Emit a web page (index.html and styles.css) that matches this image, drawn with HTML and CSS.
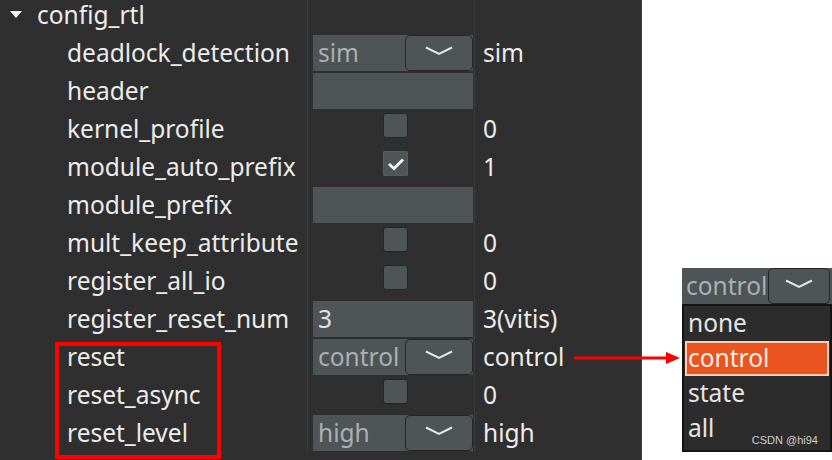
FILE: index.html
```html
<!DOCTYPE html>
<html>
<head>
<meta charset="utf-8">
<link rel="stylesheet" href="styles.css">
</head>
<body>
<div class="screen">
  <div class="tree">
    <div class="row first">
      <div class="c1 parent"><svg class="twisty" width="12" height="8" viewBox="0 0 12 8"><polygon points="0,0 12,0 6,7" fill="#f2f2f2"/></svg>config_rtl</div>
      <div class="c2"></div>
      <div class="c3"></div>
    </div>
    <div class="row">
      <div class="c1">deadlock_detection</div>
      <div class="c2"><div class="combo"><span class="combo-text">sim</span><span class="combo-btn"><svg width="28" height="10" viewBox="0 0 28 10"><path d="M1 1.5 L14 8 L27 1.5" fill="none" stroke="#e6e6e6" stroke-width="2"/></svg></span></div></div>
      <div class="c3">sim</div>
    </div>
    <div class="row">
      <div class="c1">header</div>
      <div class="c2"><div class="edit"></div></div>
      <div class="c3"></div>
    </div>
    <div class="row">
      <div class="c1">kernel_profile</div>
      <div class="c2 check-cell"><span class="check"></span></div>
      <div class="c3">0</div>
    </div>
    <div class="row">
      <div class="c1">module_auto_prefix</div>
      <div class="c2 check-cell"><span class="check checked"><svg width="18" height="14" viewBox="0 0 18 14"><path d="M2 7 L7 11.5 L16 2.5" fill="none" stroke="#f4f4f4" stroke-width="2.8"/></svg></span></div>
      <div class="c3">1</div>
    </div>
    <div class="row">
      <div class="c1">module_prefix</div>
      <div class="c2"><div class="edit"></div></div>
      <div class="c3"></div>
    </div>
    <div class="row">
      <div class="c1">mult_keep_attribute</div>
      <div class="c2 check-cell"><span class="check"></span></div>
      <div class="c3">0</div>
    </div>
    <div class="row">
      <div class="c1">register_all_io</div>
      <div class="c2 check-cell"><span class="check"></span></div>
      <div class="c3">0</div>
    </div>
    <div class="row">
      <div class="c1">register_reset_num</div>
      <div class="c2"><div class="edit">3</div></div>
      <div class="c3">3(vitis)</div>
    </div>
    <div class="row">
      <div class="c1">reset</div>
      <div class="c2"><div class="combo"><span class="combo-text">control</span><span class="combo-btn"><svg width="28" height="10" viewBox="0 0 28 10"><path d="M1 1.5 L14 8 L27 1.5" fill="none" stroke="#e6e6e6" stroke-width="2"/></svg></span></div></div>
      <div class="c3">control</div>
    </div>
    <div class="row">
      <div class="c1">reset_async</div>
      <div class="c2 check-cell"><span class="check"></span></div>
      <div class="c3">0</div>
    </div>
    <div class="row">
      <div class="c1">reset_level</div>
      <div class="c2"><div class="combo"><span class="combo-text">high</span><span class="combo-btn"><svg width="28" height="10" viewBox="0 0 28 10"><path d="M1 1.5 L14 8 L27 1.5" fill="none" stroke="#e6e6e6" stroke-width="2"/></svg></span></div></div>
      <div class="c3">high</div>
    </div>
  </div>

  <div class="side">
    <div class="popup">
      <div class="popup-combo">
        <span class="popup-text">control</span>
        <span class="popup-btn"><svg width="28" height="10" viewBox="0 0 28 10"><path d="M1 1.5 L14 8 L27 1.5" fill="none" stroke="#e6e6e6" stroke-width="2"/></svg></span>
      </div>
      <ul class="list">
        <li>none</li>
        <li class="active">control</li>
        <li>state</li>
        <li>all</li>
      </ul>
      <span class="watermark">CSDN @hi94</span>
    </div>
  </div>

  <div class="annot-box"></div>
  <svg class="annot-arrow" width="110" height="16" viewBox="0 0 110 16"><line x1="0" y1="8" x2="94" y2="8" stroke="#ff0000" stroke-width="3"/><polygon points="92,2 106,8 92,14" fill="#ff0000"/></svg>
</div>
</body>
</html>
```

FILE: styles.css
```css
* { box-sizing: border-box; }

html, body {
  margin: 0;
  padding: 0;
  background: #ffffff;
}

.screen {
  position: relative;
  width: 832px;
  height: 460px;
  overflow: hidden;
  display: flex;
  font-family: "Noto Sans", "Open Sans", sans-serif;
  font-size: 24.5px;
  color: #ececec;
}

.tree {
  width: 642px;
  height: 460px;
  background: #2f2f2f;
  border-right: 1px solid #454545;
  display: flex;
  flex-direction: column;
}

.row {
  display: grid;
  grid-template-columns: 308px 167px 166px;
  height: 38px;
  flex: none;
}

.row.first {
  height: 34px;
}

.c1 {
  border-right: 1px solid #3b3b3b;
  padding-left: 67px;
  line-height: 38px;
  white-space: nowrap;
  overflow: hidden;
}

.c1.parent {
  padding-left: 10px;
  display: flex;
  align-items: flex-start;
  line-height: 30px;
}

.twisty {
  margin: 11px 15px 0 0;
}

.c2 {
  border-right: 1px solid #3b3b3b;
  padding: 1px 1px 1px 5px;
}

.c3 {
  padding-left: 8px;
  line-height: 38px;
  white-space: nowrap;
}

.combo {
  display: flex;
  height: 36px;
  background: #4f5456;
}

.combo-text {
  width: 92px;
  padding-left: 5px;
  line-height: 36px;
  color: #a9b1b5;
  white-space: nowrap;
  overflow: hidden;
}

.combo-btn {
  flex: 1;
  display: flex;
  align-items: center;
  justify-content: center;
  padding-bottom: 5px;
  border: 1px solid #242424;
  border-radius: 5px;
  background: #4f5456;
}

.edit {
  height: 36px;
  background: #4f5456;
  padding-left: 5px;
  line-height: 36px;
  color: #e2e2e2;
}

.check-cell {
  padding: 3px 0 0 75px;
}

.check {
  display: flex;
  align-items: center;
  justify-content: center;
  width: 25px;
  height: 25px;
  background: #4f5456;
  border: 1px solid #262626;
  border-radius: 3px;
}

.check.checked {
  border-color: #85407a;
  border-radius: 1px;
}

.side {
  flex: 1;
  padding: 268px 0 0 40px;
}

.popup {
  position: relative;
  width: 150px;
}

.popup-combo {
  display: flex;
  height: 36px;
  background: #4f5456;
}

.popup-text {
  width: 86px;
  padding-left: 4px;
  line-height: 36px;
  color: #a9b1b5;
}

.popup-btn {
  width: 62px;
  display: flex;
  align-items: center;
  justify-content: center;
  padding-bottom: 5px;
  border: 1px solid #242424;
  border-radius: 5px;
}

.list {
  list-style: none;
  margin: 0;
  padding: 0 1px;
  height: 148px;
  background: #2c2c2c;
  border: 2px solid #141414;
  color: #e6e6e6;
}

.list li {
  height: 35px;
  line-height: 33px;
  padding-left: 3px;
}

.list li.active {
  background: #e95420;
  border: 2px solid #f8cdb2;
  line-height: 30px;
  padding-left: 1px;
  color: #fbeee6;
}

.watermark {
  position: absolute;
  right: 14px;
  bottom: 6px;
  font-family: "Liberation Sans", Arial, sans-serif;
  font-size: 11px;
  color: #d0d0d0;
}

.annot-box {
  position: absolute;
  left: 55px;
  top: 342px;
  width: 166px;
  height: 117px;
  border: 4px solid #ff0000;
}

.annot-arrow {
  position: absolute;
  left: 574px;
  top: 350px;
}
```
